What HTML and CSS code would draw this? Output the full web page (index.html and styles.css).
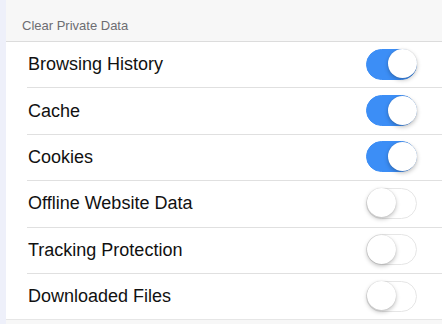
FILE: index.html
```html
<!DOCTYPE html>
<html>
<head>
<meta charset="utf-8">
<link rel="stylesheet" href="styles.css">
</head>
<body>
<div class="page">
  <div class="strip"></div>
  <div class="main">
    <div class="header">Clear Private Data</div>
    <div class="list">
      <div class="row"><span class="label">Browsing History</span><span class="toggle on"><span class="knob"></span></span></div>
      <div class="row"><span class="label">Cache</span><span class="toggle on"><span class="knob"></span></span></div>
      <div class="row"><span class="label">Cookies</span><span class="toggle on"><span class="knob"></span></span></div>
      <div class="row"><span class="label">Offline Website Data</span><span class="toggle"><span class="knob"></span></span></div>
      <div class="row"><span class="label">Tracking Protection</span><span class="toggle"><span class="knob"></span></span></div>
      <div class="row last"><span class="label">Downloaded Files</span><span class="toggle"><span class="knob"></span></span></div>
    </div>
    <div class="footer"></div>
  </div>
</div>
</body>
</html>
```
FILE: styles.css
```css
html, body {
  margin: 0;
  padding: 0;
  background: #f7f7f7;
}
.page {
  display: flex;
  width: 442px;
  height: 324px;
  overflow: hidden;
  font-family: "Liberation Sans", Arial, sans-serif;
}
.strip {
  width: 6px;
  flex: none;
  background: #eef0fa;
}
.main {
  flex: 1;
  display: flex;
  flex-direction: column;
  background: #f7f7f7;
}
.header {
  height: 42px;
  box-sizing: border-box;
  padding: 18px 0 0 16px;
  font-size: 13px;
  line-height: 16px;
  color: #6d6d72;
  border-bottom: 1px solid #dcdcdc;
}
.list {
  background: #fff;
  padding-left: 21px;
  border-bottom: 1px solid #e6e6e6;
}
.row {
  height: 45.4px;
  display: flex;
  align-items: center;
  justify-content: space-between;
  border-bottom: 1px solid #e0e0e0;
  padding-right: 25px;
}
.row.last {
  border-bottom: none;
}
.label {
  font-size: 18px;
  color: #111;
  padding-left: 1px;
}
.toggle {
  position: relative;
  width: 51px;
  height: 31px;
  box-sizing: border-box;
  border-radius: 16px;
  background: #fff;
  border: 1.5px solid #e6e6e6;
  margin-top: -1px;
}
.toggle.on {
  background: #3c8ef6;
  border-color: #3c8ef6;
}
.knob {
  position: absolute;
  top: -0.5px;
  left: -0.5px;
  width: 29px;
  height: 29px;
  border-radius: 50%;
  background: #fff;
  box-shadow: 0 2px 4px rgba(0,0,0,0.25), 0 0 1px rgba(0,0,0,0.2);
}
.toggle.on .knob {
  left: auto;
  right: -0.5px;
}
.footer {
  flex: 1;
}
```
